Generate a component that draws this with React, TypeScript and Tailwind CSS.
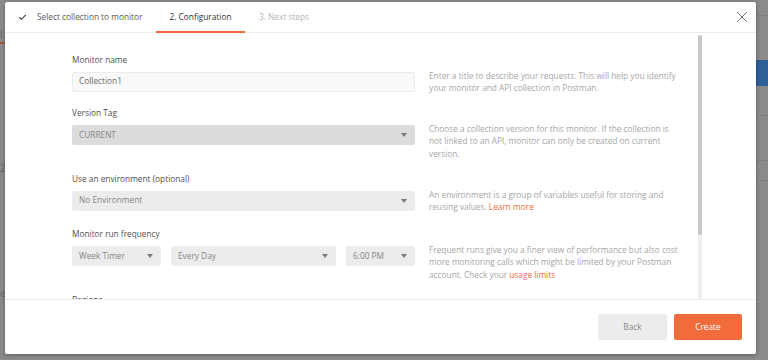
import { Check, X } from "lucide-react";

const font = { fontFamily: '"Open Sans", "Liberation Sans", sans-serif' };

function Caret() {
  return (
    <svg width="6" height="4" viewBox="0 0 6 4" className="shrink-0">
      <path d="M0 0 L6 0 L3 4 Z" fill="#7a7a7a" />
    </svg>
  );
}

function Select({ value, className, disabled }: { value: string; className: string; disabled?: boolean }) {
  return (
    <div
      className={`flex h-[20px] items-center justify-between rounded-[2px] pl-[7px] pr-[8px] text-[8.3px] text-[#858585] ${
        disabled ? "bg-[#dcdcdc]" : "bg-[#ececec]"
      } ${className}`}
    >
      <span>{value}</span>
      <Caret />
    </div>
  );
}

function Row({
  label,
  control,
  help,
  className,
}: {
  label: string;
  control: React.ReactNode;
  help: React.ReactNode;
  className?: string;
}) {
  return (
    <div className={`flex items-start ${className ?? ""}`}>
      <div className="w-[343px] shrink-0">
        <div className="h-[14px] text-[8.3px] leading-[14px] text-[#505050]">{label}</div>
        <div className="mt-[4.5px]">{control}</div>
      </div>
      <div className="ml-[14px] w-[250px] pt-[16.5px] text-[8.3px] leading-[12.4px] text-[#a6a6a6]">{help}</div>
    </div>
  );
}

export default function App() {
  return (
    <div className="relative h-[360px] w-[768px] overflow-hidden bg-[#8b8b8b]" style={font}>
      {/* faint app behind the overlay */}
      <div className="absolute left-0 top-[42px] h-[2px] w-[6px] bg-[#a0583a]" />
      <div className="absolute left-0 top-[27px] text-[10px] text-[#6a6a6a]">l</div>
      <div className="absolute left-0 top-[161px] text-[10px] text-[#6a6a6a]">2</div>
      <div className="absolute left-0 top-[286px] text-[10px] text-[#6a6a6a]">e</div>
      <div className="absolute left-[756px] top-[60px] h-[26px] w-[12px] bg-[#2f5f98]" />
      <div className="absolute left-[756px] top-[15px] h-px w-[12px] bg-[#7f7f7f]" />
      <div className="absolute left-[756px] top-[115px] h-px w-[12px] bg-[#7f7f7f]" />
      <div className="absolute left-[756px] top-[160px] h-px w-[12px] bg-[#7f7f7f]" />
      <div className="absolute left-[756px] top-[180px] h-px w-[12px] bg-[#7f7f7f]" />

      {/* modal */}
      <div className="absolute left-[5px] top-[2px] flex h-[352px] w-[751px] flex-col rounded-[2px] bg-white shadow-[0_1px_4px_rgba(0,0,0,0.35)]">
        <div className="flex h-[31px] shrink-0 items-stretch border-b border-[#ececec] pr-[5px]">
          <div className="flex w-[151px] items-center gap-[10px] pl-[13px] text-[8.3px] text-[#5a5a5a]">
            <Check size={9} strokeWidth={3} className="text-[#505050]" />
            <span>Select collection to monitor</span>
          </div>
          <div className="relative flex w-[89px] items-center justify-center text-[8.3px] text-[#333333]">
            2. Configuration
            <div className="absolute bottom-[-1px] left-0 right-0 h-[2px] bg-[#f26b3a]" />
          </div>
          <div className="flex items-center pl-[14px] text-[8.3px] text-[#b5b5b5]">3. Next steps</div>
          <div className="ml-auto flex items-center">
            <X size={18} strokeWidth={1.3} className="text-[#6e6e6e]" />
          </div>
        </div>

        <div className="relative min-h-0 flex-1 overflow-hidden">
          <div className="pl-[67px] pt-[20px]">
            <Row
              label="Monitor name"
              control={
                <div className="flex h-[20px] items-center rounded-[2px] border border-[#ececec] bg-[#f9f9f9] pl-[6px] text-[8.3px] text-[#6a6a6a]">
                  Collection1
                </div>
              }
              help={
                <>
                  Enter a title to describe your requests. This will help you identify your monitor and API collection in
                  Postman.
                </>
              }
            />
            <Row
              className="mt-[12px]"
              label="Version Tag"
              control={<Select value="CURRENT" className="w-full" disabled />}
              help={
                <>
                  Choose a collection version for this monitor. If the collection is not linked to an API, monitor can only
                  be created on current version.
                </>
              }
            />
            <Row
              className="mt-[12px]"
              label="Use an environment (optional)"
              control={<Select value="No Environment" className="w-full" />}
              help={
                <>
                  An environment is a group of variables useful for storing and reusing values.{" "}
                  <span className="text-[#f26b3a]">Learn more</span>
                </>
              }
            />
            <Row
              className="mt-[14px]"
              label="Monitor run frequency"
              control={
                <div className="flex gap-[10px]">
                  <Select value="Week Timer" className="w-[89px]" />
                  <Select value="Every Day" className="w-[165px]" />
                  <Select value="6:00 PM" className="w-[69px]" />
                </div>
              }
              help={
                <>
                  Frequent runs give you a finer view of performance but also cost more monitoring calls which might be
                  limited by your Postman account. Check your <span className="text-[#f26b3a]">usage limits</span>
                </>
              }
            />
            <div className="mt-[12px] text-[8.3px] leading-[14px] text-[#505050]">Regions</div>
          </div>
          <div className="absolute left-[693px] top-[2px] bottom-0 w-[4px] rounded-[2px] bg-[#efefef]">
            <div className="h-[200px] rounded-[2px] bg-[#c8c8c8]" />
          </div>
        </div>

        <div className="flex h-[55px] shrink-0 items-center justify-end gap-[7px] border-t border-[#ececec] pr-[14px]">
          <div className="flex h-[26px] w-[69px] items-center justify-center rounded-[2px] bg-[#ececec] text-[8.3px] text-[#8a8a8a]">
            Back
          </div>
          <div className="flex h-[26px] w-[68px] items-center justify-center rounded-[2px] bg-[#f26b3a] text-[8.3px] text-white">
            Create
          </div>
        </div>
      </div>
    </div>
  );
}
